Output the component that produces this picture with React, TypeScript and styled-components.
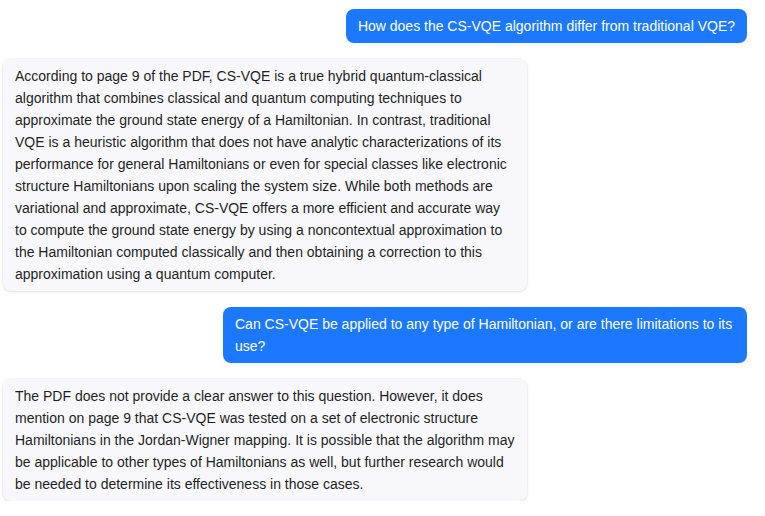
import styled, { createGlobalStyle } from 'styled-components'

const GlobalStyle = createGlobalStyle`
  body {
    margin: 0;
    background: #ffffff;
    font-family: 'Liberation Sans', Arial, sans-serif;
  }
`

type Message = { id: number; from: 'user' | 'bot'; text: string }

const messages: Message[] = [
  {
    id: 1,
    from: 'user',
    text: 'How does the CS-VQE algorithm differ from traditional VQE?'
  },
  {
    id: 2,
    from: 'bot',
    text:
      'According to page 9 of the PDF, CS-VQE is a true hybrid quantum-classical algorithm that combines classical and quantum computing techniques to approximate the ground state energy of a Hamiltonian. In contrast, traditional VQE is a heuristic algorithm that does not have analytic characterizations of its performance for general Hamiltonians or even for special classes like electronic structure Hamiltonians upon scaling the system size. While both methods are variational and approximate, CS-VQE offers a more efficient and accurate way to compute the ground state energy by using a noncontextual approximation to the Hamiltonian computed classically and then obtaining a correction to this approximation using a quantum computer.'
  },
  {
    id: 3,
    from: 'user',
    text:
      'Can CS-VQE be applied to any type of Hamiltonian, or are there limitations to its use?'
  },
  {
    id: 4,
    from: 'bot',
    text:
      'The PDF does not provide a clear answer to this question. However, it does mention on page 9 that CS-VQE was tested on a set of electronic structure Hamiltonians in the Jordan-Wigner mapping. It is possible that the algorithm may be applicable to other types of Hamiltonians as well, but further research would be needed to determine its effectiveness in those cases.'
  }
]

export default function App() {
  return (
    <>
      <GlobalStyle />
      <Thread>
        {messages.map((m) => (
          <Row key={m.id} $from={m.from}>
            <Bubble $from={m.from}>{m.text}</Bubble>
          </Row>
        ))}
      </Thread>
    </>
  )
}

const Thread = styled.div`
  display: flex;
  flex-direction: column;
  gap: 16px;
  padding: 9px 18px 0 3px;
`

const Row = styled.div<{ $from: 'user' | 'bot' }>`
  display: flex;
  justify-content: ${(p) => (p.$from === 'user' ? 'flex-end' : 'flex-start')};
`

const Bubble = styled.div<{ $from: 'user' | 'bot' }>`
  box-sizing: border-box;
  max-width: 524px;
  padding: 6px 12px;
  border-radius: 8px;
  font-size: 14px;
  line-height: 22px;
  background: ${(p) => (p.$from === 'user' ? '#1b78ff' : '#f8f8fc')};
  color: ${(p) => (p.$from === 'user' ? '#ffffff' : '#1f1f1f')};
  box-shadow: ${(p) =>
    p.$from === 'user'
      ? 'none'
      : '0 0 0 1px rgba(0, 0, 0, 0.03), 0 1px 3px rgba(0, 0, 0, 0.1)'};
`
